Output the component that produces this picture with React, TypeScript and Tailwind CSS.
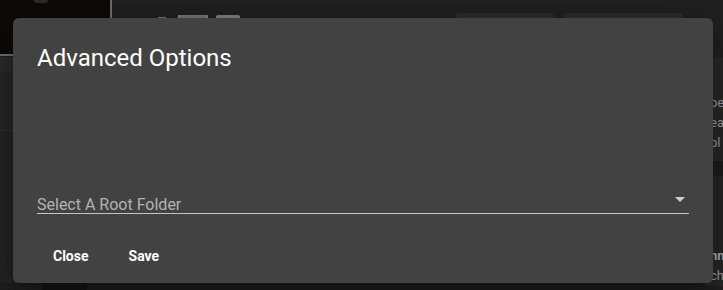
import React from "react";

export default function App() {
  return (
    <div
      className="relative w-[723px] h-[290px] overflow-hidden bg-[#212121]"
      style={{ fontFamily: "Roboto, 'Liberation Sans', sans-serif" }}
    >
      {/* dimmed background app */}
      <div className="flex flex-col w-full h-full">
        <div className="flex h-[57px] shrink-0 bg-[#202020]">
          <div className="w-[112px] h-[56px] bg-[#0e0a07] border-r-2 border-b-2 border-[#6c6c6c]">
            <div className="ml-[34px] w-[14px] h-[3px] rounded-b-full bg-[#2c2a28]" />
          </div>
          <div className="flex items-start pt-[15px] pl-[46px]">
            <div className="w-[8px] h-[3px] bg-[#5a6f86] mt-[2px]" />
            <div className="ml-[12px] w-[30px] h-[4px] bg-[#6f6f6f] border-l border-r border-[#b07a3a]" />
            <div className="ml-[8px] w-[24px] h-[4px] bg-[#7a7a7a] rounded-t-[2px]" />
          </div>
          <div className="flex-1" />
          <div className="flex items-start pt-[13px] gap-[10px] pr-[40px]">
            <div className="w-[98px] h-[30px] rounded-[4px] bg-[#2b2b2b]" />
            <div className="w-[119px] h-[30px] rounded-[4px] bg-[#2b2b2b]" />
          </div>
        </div>
        <div className="flex flex-1">
          <div className="flex-1 flex flex-col">
            <div className="h-[14px] bg-[#2a2a2a]" />
            <div className="h-[60px] bg-[#262626] border-b border-[#2e2e2e]" />
            <div className="flex-1 bg-[#242424]" />
            <div className="h-[7px] bg-[#1f1f1f] flex">
              <div className="ml-[42px] w-[45px] h-full bg-[#151515]" />
            </div>
          </div>
          <div className="w-[17px] flex flex-col bg-[#282828] text-[13px] leading-[20px] text-[#9b9b9b]">
            <div className="h-[36px]" />
            <div className="whitespace-nowrap ml-[4px]">pe</div>
            <div className="whitespace-nowrap ml-[4px]">ea</div>
            <div className="whitespace-nowrap ml-[4px]">pl</div>
            <div className="h-[8px]" />
            <div className="h-[15px] bg-[#1c1c1c]" />
            <div className="h-[70px] bg-[#262626]" />
            <div className="whitespace-nowrap ml-[4px] font-bold text-[#a8a8a8] bg-[#262626]">nn</div>
            <div className="whitespace-nowrap ml-[4px] bg-[#262626]">ch</div>
            <div className="flex-1 bg-[#1f1f1f]" />
          </div>
        </div>
      </div>

      {/* dialog */}
      <div className="absolute left-[13px] top-[18px] w-[700px] h-[265px] rounded-[6px] bg-[#424242] shadow-[0_11px_15px_-7px_rgba(0,0,0,0.2),0_24px_38px_3px_rgba(0,0,0,0.14),0_9px_46px_8px_rgba(0,0,0,0.12)] flex flex-col">
        <div className="pt-[24px] px-[24px] text-[24px] leading-[32px] text-white font-normal">
          Advanced Options
        </div>
        <div className="flex-1" />
        <div className="mx-[24px] flex items-start h-[17px] border-b border-[#c4c4c4]">
          <div className="flex-1 text-[16px] leading-[16px] text-[#b3b3b3]">
            Select A Root Folder
          </div>
          <svg width="10" height="5" viewBox="0 0 10 5" className="mr-[4px]">
            <path d="M0 0 L5 5 L10 0 Z" fill="#cfcfcf" />
          </svg>
        </div>
        <div className="h-[24px]" />
        <div className="flex items-center gap-[8px] px-[24px] pb-[9px]">
          <button className="h-[36px] px-[16px] text-[14px] leading-[20px] font-bold text-white">
            Close
          </button>
          <button className="h-[36px] px-[16px] text-[14px] leading-[20px] font-bold text-white">
            Save
          </button>
        </div>
      </div>
    </div>
  );
}
